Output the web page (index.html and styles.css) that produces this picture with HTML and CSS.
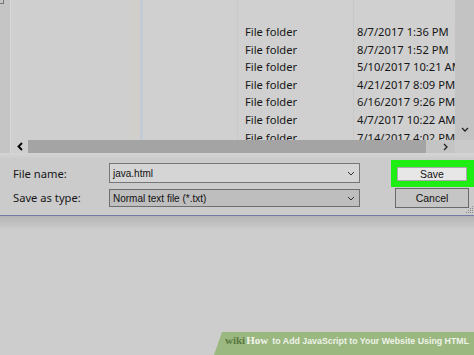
FILE: index.html
```html
<!DOCTYPE html>
<html lang="en">
<head>
    <meta charset="UTF-8">
    <meta name="viewport" content="width=device-width, initial-scale=1.0">
    <title>Save As</title>
    <link rel="stylesheet" href="styles.css">
</head>
<body>
    <div class="dialog">
        <div class="browser">
            <div class="edge"><span class="corner-mark"></span></div>
            <div class="panes">
                <div class="nav"></div>
                <div class="splitter"></div>
                <div class="list">
                    <div class="row"><span class="name"></span><span class="type">File folder</span><span class="date">8/7/2017 1:36 PM</span></div>
                    <div class="row"><span class="name"></span><span class="type">File folder</span><span class="date">8/7/2017 1:52 PM</span></div>
                    <div class="row"><span class="name"></span><span class="type">File folder</span><span class="date">5/10/2017 10:21 AM</span></div>
                    <div class="row"><span class="name"></span><span class="type">File folder</span><span class="date">4/21/2017 8:09 PM</span></div>
                    <div class="row"><span class="name"></span><span class="type">File folder</span><span class="date">6/16/2017 9:26 PM</span></div>
                    <div class="row"><span class="name"></span><span class="type">File folder</span><span class="date">4/7/2017 10:22 AM</span></div>
                    <div class="row"><span class="name"></span><span class="type">File folder</span><span class="date">7/14/2017 4:02 PM</span></div>
                </div>
            </div>
            <div class="vscroll">
                <svg width="8" height="5" viewBox="0 0 8 5"><polyline points="1,1 4,4 7,1" fill="none" stroke="#222" stroke-width="1.3"/></svg>
            </div>
            <div class="hscroll">
                <span class="arrow">
                    <svg width="6" height="9" viewBox="0 0 6 9"><polyline points="5,1 1.5,4.5 5,8" fill="none" stroke="#000" stroke-width="1.8"/></svg>
                </span>
                <span class="thumb"></span>
                <span class="arrow right">
                    <svg width="5" height="8" viewBox="0 0 5 8"><polyline points="1,1 4,4 1,7" fill="none" stroke="#222" stroke-width="1.3"/></svg>
                </span>
            </div>
            <div class="scroll-corner"></div>
        </div>

        <div class="form">
            <div class="form-row">
                <span class="label">File name:</span>
                <div class="field combo">
                    <span>java.html</span>
                    <svg width="8" height="5" viewBox="0 0 8 5"><polyline points="1,1 4,4 7,1" fill="none" stroke="#333" stroke-width="1"/></svg>
                </div>
                <div class="highlight"><button class="btn save">Save</button></div>
            </div>
            <div class="form-row second">
                <span class="label">Save as type:</span>
                <div class="field select">
                    <span>Normal text file (*.txt)</span>
                    <svg width="8" height="5" viewBox="0 0 8 5"><polyline points="1,1 4,4 7,1" fill="none" stroke="#333" stroke-width="1"/></svg>
                </div>
                <button class="btn cancel">Cancel</button>
            </div>
            <svg class="grip" width="9" height="9" viewBox="0 0 9 9">
                <rect x="7" y="1" width="1" height="1" fill="#888"/>
                <rect x="5" y="3" width="1" height="1" fill="#888"/>
                <rect x="7" y="3" width="1" height="1" fill="#888"/>
                <rect x="3" y="5" width="1" height="1" fill="#888"/>
                <rect x="5" y="5" width="1" height="1" fill="#888"/>
                <rect x="7" y="5" width="1" height="1" fill="#888"/>
                <rect x="1" y="7" width="1" height="1" fill="#888"/>
                <rect x="3" y="7" width="1" height="1" fill="#888"/>
                <rect x="5" y="7" width="1" height="1" fill="#888"/>
                <rect x="7" y="7" width="1" height="1" fill="#888"/>
            </svg>
        </div>
    </div>
    <div class="shadow"></div>

    <div class="watermark">
        <span class="wiki">wiki</span><span class="how">How</span>
        <span class="title">to Add JavaScript to Your Website Using HTML</span>
    </div>
</body>
</html>
```

FILE: styles.css
```css
body {
    margin: 0;
    width: 474px;
    height: 355px;
    overflow: hidden;
    position: relative;
    background-color: #cdcdcd;
    font-family: "Noto Sans", Arial, sans-serif;
    color: #161616;
}
.dialog {
    background-color: #cbcbcb;
    border-bottom: 1px solid #7579a8;
}
.browser {
    display: grid;
    grid-template-columns: 11px 1fr 19px;
    grid-template-rows: 140px 13px;
}
.edge {
    grid-row: 1 / 3;
    background-color: #c5c5c5;
    border-right: 1px solid #d9d9d9;
    box-sizing: border-box;
    position: relative;
}
.corner-mark {
    position: absolute;
    top: 0;
    left: 0;
    width: 3px;
    height: 3px;
    border-right: 1px solid #777;
    border-bottom: 1px solid #777;
}
.panes {
    display: flex;
    background-color: #d0d0d0;
    overflow: hidden;
}
.nav {
    width: 119px;
    background-color: #cfcfcf;
    border-right: 10px solid #d1cfcc;
}
.splitter {
    width: 3px;
    background-color: #c3cad3;
}
.list {
    flex: 1;
    padding-top: 23px;
    overflow: hidden;
    background: linear-gradient(to right, transparent 94px, #c9c9c9 94px, #c9c9c9 95px, transparent 95px, transparent 210px, #c9c9c9 210px, #c9c9c9 211px, transparent 211px);
}
.row {
    display: flex;
    height: 17.6px;
    line-height: 17.6px;
    font-size: 11.2px;
    white-space: nowrap;
}
.row .name {
    width: 95px;
}
.row .type {
    width: 108px;
    padding-left: 7px;
}
.row .date {
    width: 98px;
    padding-left: 4px;
    overflow: hidden;
}
.vscroll {
    background-color: #c3c3c3;
    display: flex;
    justify-content: center;
    align-items: flex-end;
    padding-bottom: 8px;
    box-sizing: border-box;
}
.hscroll {
    display: flex;
    background-color: #c4c4c4;
}
.hscroll .arrow {
    width: 17px;
    display: flex;
    align-items: center;
    justify-content: center;
    background-color: #cfcfcf;
}
.hscroll .arrow.right {
    width: 29px;
    background-color: #c4c4c4;
    justify-content: flex-end;
    padding-right: 7px;
    box-sizing: border-box;
}
.hscroll .thumb {
    flex: 1;
    background-color: #a4a4a4;
}
.scroll-corner {
    background-color: #cacaca;
}
.form {
    position: relative;
    padding: 7px 0 8px 13px;
    background: linear-gradient(#d5d5d5, #cbcbcb 6px);
}
.form-row {
    display: flex;
    align-items: center;
    height: 26px;
}
.form-row.second {
    height: 19px;
    margin-top: 2px;
}
.label {
    width: 96px;
    font-size: 11.2px;
}
.field {
    width: 251px;
    box-sizing: border-box;
    display: flex;
    align-items: center;
    justify-content: space-between;
    padding: 0 4px 0 3px;
    font-family: "Liberation Sans", Arial, sans-serif;
    font-size: 10px;
    color: #111;
}
.combo {
    height: 20px;
    background-color: #d5d5d5;
    border: 1px solid #777;
}
.select {
    height: 18px;
    margin-top: 1px;
    background-color: #bebebe;
    border: 1px solid #6e6e6e;
}
.highlight {
    margin-left: 31px;
    flex: 1;
    height: 27px;
    box-sizing: border-box;
    padding: 7px 0 0 6px;
    background-color: #1fee14;
}
.btn {
    font-family: "Liberation Sans", Arial, sans-serif;
    font-size: 10.5px;
    color: #111;
    padding: 0;
    margin: 0;
}
.save {
    display: block;
    width: 70px;
    height: 14px;
    line-height: 12px;
    background-color: #e7e7e7;
    border: 1px solid #a8a8a8;
}
.cancel {
    margin-left: 35px;
    width: 74px;
    height: 20px;
    background-color: #c5c5c5;
    border: 1px solid #6a6a6a;
}
.grip {
    position: absolute;
    right: 0;
    bottom: 1px;
}
.shadow {
    height: 14px;
    background: linear-gradient(#b4b4b4, #cdcdcd);
}
.watermark {
    position: absolute;
    right: 0;
    bottom: 0;
    width: 260px;
    height: 23px;
    box-sizing: border-box;
    padding: 0 0 0 11px;
    background-color: #9bb881;
    clip-path: polygon(8px 0, 100% 0, 100% 100%, 0 100%);
    white-space: nowrap;
    line-height: 12px;
}
.wiki, .how {
    font-family: "Liberation Serif", serif;
    font-weight: bold;
    font-size: 11px;
}
.wiki {
    color: #5a7640;
}
.how {
    color: #f1f5ec;
    margin-left: 1px;
}
.title {
    font-family: "Liberation Sans", Arial, sans-serif;
    font-weight: bold;
    font-size: 8.8px;
    color: #eef3e8;
}
```
